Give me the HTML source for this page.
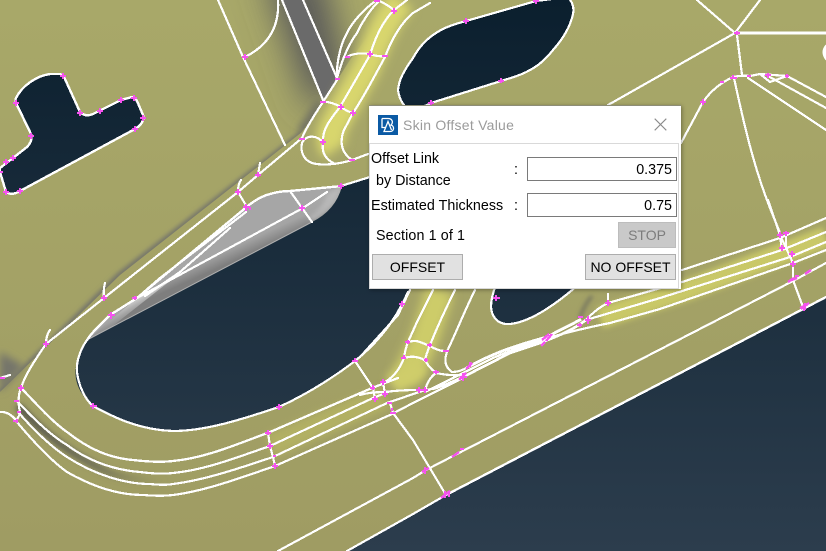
<!DOCTYPE html>
<html><head><meta charset="utf-8"><style>
html,body{margin:0;padding:0;background:#a6a567}
#w{position:relative;width:826px;height:551px;overflow:hidden;font-family:"Liberation Sans",sans-serif;font-size:14.3px;color:#000}
#w>svg{position:absolute;left:0;top:0}
#d{position:absolute;left:369px;top:105px;width:312px;height:183px;background:#fff;border-top:1px solid #8d8d78;box-shadow:1px 1px 4px rgba(0,0,0,.35)}
#p{position:absolute;left:0;top:37px;width:308px;height:144px;border:1px solid #d9d9d9;box-sizing:content-box}
.t{position:absolute;white-space:nowrap;line-height:18px}
.i{position:absolute;left:158px;width:148px;height:22px;border:1px solid #7a7a7a;background:#fff;text-align:right;line-height:24px;box-sizing:content-box}
.i span{padding-right:4px}
.b{position:absolute;box-sizing:border-box;border:1px solid #adadad;background:#e1e1e1;text-align:center;font-size:14px}
</style></head><body><div id="w">
<svg width="826" height="551" viewBox="0 0 826 551" fill="none">
<defs>
<linearGradient id="bg" gradientUnits="userSpaceOnUse" x1="0" y1="0" x2="0" y2="551"><stop offset="0" stop-color="#a8a869"/><stop offset="1" stop-color="#9f9c63"/></linearGradient>
<linearGradient id="dk" gradientUnits="userSpaceOnUse" x1="0" y1="0" x2="0" y2="551"><stop offset="0" stop-color="#0b1f2e"/><stop offset="1" stop-color="#2c3d4d"/></linearGradient>
<linearGradient id="wg" gradientUnits="userSpaceOnUse" x1="245" y1="232" x2="254" y2="252"><stop offset="0" stop-color="#a8a8a8"/><stop offset=".4" stop-color="#a4a4a4"/><stop offset="1" stop-color="#7e7e7e"/></linearGradient>
<linearGradient id="wl" gradientUnits="userSpaceOnUse" x1="120" y1="305" x2="132" y2="327"><stop offset="0" stop-color="#e8e8e8" stop-opacity=".9"/><stop offset="1" stop-color="#8a8a8a" stop-opacity="0"/></linearGradient>
<linearGradient id="cs" gradientUnits="userSpaceOnUse" x1="15" y1="0" x2="165" y2="0"><stop offset="0" stop-color="#4f4f4a"/><stop offset=".55" stop-color="#6f6f58"/><stop offset="1" stop-color="#8a8a5e" stop-opacity="0"/></linearGradient>
<filter id="b2" filterUnits="userSpaceOnUse" x="-50" y="-50" width="926" height="651"><feGaussianBlur stdDeviation="2"/></filter>
<filter id="b3" filterUnits="userSpaceOnUse" x="-50" y="-50" width="926" height="651"><feGaussianBlur stdDeviation="3"/></filter>
<filter id="b4" filterUnits="userSpaceOnUse" x="-50" y="-50" width="926" height="651"><feGaussianBlur stdDeviation="4"/></filter>
<filter id="b5" filterUnits="userSpaceOnUse" x="-50" y="-50" width="926" height="651"><feGaussianBlur stdDeviation="5"/></filter>
<filter id="b14" filterUnits="userSpaceOnUse" x="-50" y="-50" width="926" height="651"><feGaussianBlur stdDeviation="17"/></filter>
<clipPath id="cf"><path d="M0,0H395L350,60L323,102L302,132L120,275L0,392Z"/></clipPath>
</defs>
<rect width="826" height="551" fill="url(#bg)"/>

<!-- soft shading above fold -->
<g clip-path="url(#cf)">
<path d="M262,-30H322L348,78L312,112Z" fill="#5a5a5a" filter="url(#b14)"/>
<path d="M303,134L120,276L0,394" stroke="#76766a" stroke-width="8" filter="url(#b2)"/>
<path d="M322,104L302,134" stroke="#6f6f62" stroke-width="12" filter="url(#b4)"/>
</g>
<path d="M282,0H303L337,78L323,100Z" fill="#6a6a6a"/>
<path d="M24,366L0,392L0,352Z" fill="#74746a" filter="url(#b4)"/>

<!-- yellow bands -->
<path d="M402,0C385,20 378,40 365,70L338,118C330,132 328,140 335,150" stroke="#d8d66d" stroke-width="28" filter="url(#b5)"/>
<path d="M440,290L426,335C418,355 412,365 405,378" stroke="#cdcc69" stroke-width="28" filter="url(#b5)"/>
<path d="M392,385Q412,370 420,378" stroke="#cfcd6a" stroke-width="22" filter="url(#b4)"/>
<path d="M600,318L690,289L826,237" stroke="#c9c868" stroke-width="21" filter="url(#b3)"/>
<path d="M270,446L385,397" stroke="#b5b363" stroke-width="24" filter="url(#b4)" opacity=".85"/>
<path d="M580,318Q584,305 592,296" stroke="#70705f" stroke-width="3" filter="url(#b2)"/>
<path d="M18,406C40,430 65,452 110,473C125,478 140,480 165,481" stroke="url(#cs)" stroke-width="7" filter="url(#b3)"/>

<!-- wedge -->
<path d="M87,340C95,330 100,325 110,315L137,298L243,210L267,195Q278,191 290,191L342,186Q336,210 312,222Z" fill="#a6a6a6"/>
<path d="M87,340L137,298L303,208L327,192L342,186Q336,210 312,222Z" fill="url(#wg)"/>
<path d="M87,340L137,298L175,277L100,336Z" fill="url(#wl)"/>
<path d="M327,194Q322,210 308,216L312,222Q336,210 342,186Z" fill="#c0c0c0" filter="url(#b2)" opacity=".7"/>

<!-- dark holes -->
<path d="M87,340L312,222Q336,210 342,186L372,176L420,260L408,292C395,322 375,345 355,361C330,380 305,395 279,407C240,420 205,431 173,431C140,430 115,418 93,406C80,395 72,380 77,362Q80,350 87,340Z" fill="url(#dk)"/>
<path d="M87,340L312,222" stroke="#b0b0b0" stroke-width="1"/>
<g shape-rendering="crispEdges">
<path d="M16,98C22,86 36,76 50,74L60,74Q63,75 65,79L80,112Q86,118 95,113L121,100L132,97Q135,97 137,101L143,115Q145,123 135,129L20,191Q12,196 6,192L0,172V168L13,158L27,147Q33,141 31,134L16,103Q15,100 16,98Z" fill="url(#dk)" stroke="#fff" stroke-width="2.4"/>
<path d="M398,90C399,80 403,72 413,58C420,45 428,38 436,33C445,27 455,24 466,21L536,1L568,-3Q575,5 573,14C570,28 562,40 553,50C545,60 538,66 530,70C520,76 510,78 501,81L431,103L412,112Q400,105 398,90Z" fill="url(#dk)" stroke="#fff" stroke-width="2.2"/>
<path d="M496,285Q488,305 493,315Q498,325 510,324C530,322 555,305 578,285Z" fill="url(#dk)" stroke="#fff" stroke-width="2.2"/>
</g>
<path d="M347,551L413,514L446,495L805,308L826,297V551Z" fill="url(#dk)"/>
<path d="M826,45Q820,52 826,60" fill="#fff" stroke="#fff"/>

<!-- white lines -->
<g stroke="#fff" stroke-width="2.2" stroke-linecap="round" stroke-linejoin="round" shape-rendering="crispEdges">
<path d="M218,0L243,57L285,145"/>
<path d="M278,0C280,30 265,47 245,57"/>
<path d="M282,0L323,100M303,0L337,78"/>
<!-- upper band -->
<path d="M302,138C306,128 315,114 323,102L337,80C336,65 340,45 347,33C352,22 365,8 377,0"/>
<path d="M337,78C342,60 348,45 357,33C362,22 370,10 378,2"/>
<path d="M323,140C323,130 328,122 340,107L370,55C375,38 382,22 394,10L407,0"/>
<path d="M352,160C340,152 340,140 344,130L353,113C365,95 375,75 385,57C392,38 402,22 413,13L430,3"/>
<path d="M322,102Q330,101 341,107Q348,112 353,113"/>
<path d="M347,57Q355,52 370,54Q378,57 385,56"/>
<path d="M377,0Q385,3 394,10"/>
<path d="M302,143C306,134 318,135 323,143C322,150 323,158 335,164M302,143C300,152 304,160 312,163C322,166 340,164 352,160L368,154"/>
<!-- main diagonal -->
<path d="M302,138L258,175L238,192L133,275L104,298L46,344C35,360 25,375 21,388"/>
<path d="M238,192L247,207M238,192Q238,184 241,180M258,175L260,163M104,298Q103,290 105,283M46,344Q46,335 50,330"/>
<path d="M21,388C18,395 18,405 20,412C20,415 18,418 16,421M0,412Q8,411 16,420M0,378L10,375"/>
<!-- wedge lines -->
<path d="M87,340C93,331 100,325 110,315L137,298L243,210C252,202 262,196 270,194Q280,191 290,191L342,186" stroke-width="2.4"/>
<path d="M137,298L160,278L246,212M145,296L180,272L230,228M137,298L303,208L327,192M290,191L312,222M341,186L370,177"/>
<!-- large hole edge -->
<path d="M87,340C80,350 76,362 77,372C79,388 86,400 93,406C115,418 140,430 173,431C205,431 240,420 279,407C305,395 330,380 355,361C375,345 395,322 408,292"/>
<path d="M355,361L373,388"/>
<!-- curves A-D -->
<path d="M21,388C35,402 50,420 67,432C90,450 110,458 133,460C150,462 165,462 173,461C205,458 235,445 270,432L372,388L398,378" stroke-width="2.3"/>
<path d="M17,401C30,415 50,435 67,445C90,462 115,470 140,472C155,474 165,474 173,473C205,470 235,458 270,446L373,398L388,392"/>
<path d="M18,412C32,428 50,446 67,457C95,475 125,484 150,484C160,485 168,485 173,484C205,480 240,468 273,457L387,403L425,390"/>
<path d="M16,421C32,440 50,460 67,472C95,488 120,495 143,495C155,496 165,496 173,495C205,491 240,478 275,466L390,415L413,403L463,378"/>
<path d="M268,433L270,446L273,457L275,466"/>
<!-- lower band -->
<path d="M410,290L398,315L360,357"/>
<path d="M433,290L417,322L408,342Q405,350 404,358C400,368 395,376 385,382"/>
<path d="M455,290C445,310 438,325 430,345C428,350 426,355 425,360"/>
<path d="M475,290C465,310 458,328 450,345C445,355 442,365 452,372Q460,372 468,367"/>
<path d="M408,342Q415,340 420,342Q425,344 430,346Q438,351 445,351"/>
<path d="M404,358Q412,356 415,357Q425,358 428,365Q432,370 436,373C430,377 426,385 425,391"/>
<path d="M436,373Q450,376 463,375"/>
<path d="M360,395Q370,392 385,392Q400,390 418,390Q430,390 437,388L463,377"/>
<path d="M373,388L375,399M383,382L385,394M390,403L393,413M393,413L413,440L446,495"/>
<!-- to the right -->
<path d="M468,367C490,355 510,347 547,337C560,330 570,325 580,320" stroke-width="2.9"/>
<path d="M463,377L510,353L540,343C555,337 570,332 586,320" stroke-width="2.7"/>
<path d="M425,392L493,358C530,342 565,332 610,323L660,309"/>
<path d="M413,478L278,551"/>
<path d="M413,478L426,470L455,455L793,281L826,263"/>
<path d="M446,495L413,514L347,551"/>
<path d="M446,495L805,308L826,297" stroke-width="2.4"/>
<path d="M586,320Q597,308 608,303L682,282L782,250L826,232"/>
<path d="M608,303L608,294"/>
<path d="M682,270L780,238L826,218"/>
<path d="M586,320L660,298L790,257L826,242"/>
<path d="M660,309L793,263L826,250"/>
<path d="M768,200L780,235L793,263L793,280L803,307"/>
<path d="M780,236L782,250M786,233L786,248"/>
<!-- top right -->
<path d="M697,0L735,33L760,0M608,105L735,33"/>
<path d="M738,33L826,33" stroke-width="2.6"/>
<path d="M737,35L742,75"/>
<path d="M681,143L703,102C710,92 720,83 733,77Q742,75 750,76L760,74L787,76"/>
<path d="M734,78C742,115 750,150 760,180C768,205 775,220 780,233"/>
<path d="M748,78L826,130M768,76L826,108M787,76L826,97M760,74L770,82L787,76"/>
</g>

<!-- pink markers -->
<path stroke="#f653f0" stroke-width="2.4" shape-rendering="crispEdges" d="
M60,76h6M63,73v6M13,103h6M16,100v6M28,136h6M31,133v6M10,158h6M13,155v6M3,162h6M6,159v6M-3,172h6M3,192h6M6,189v6M17,191h6M20,188v6M77,113h6M80,110v6M97,111h6M100,108v6M118,100h6M121,97v6M131,98h6M134,95v6M140,118h6M143,115v6M132,129h6M135,126v6
M242,57h6M245,54v6M320,102h6M335,79h5M345,57h5M367,54h6M370,51v6M382,56h6M391,11h6M394,8v6M374,1h6
M338,107h6M341,104v6M350,113h6M353,110v6M299,139h6M320,142h6M323,139v6M349,160h6M338,186h6M341,183v6M255,175h6M258,172v5M235,192h6M238,189v6M243,207h7M246,204v7M250,207v3M299,208h6M302,205v6
M101,298h6M104,295v6M43,344h6M46,341v6M132,298h5M135,296v4M108,315h7M111,312v7M18,388h6M21,385v6M14,401h5M17,419v4M17,412h4M13,421h5M0,378h5M90,406h7M93,403v6M276,407h6M279,404v6M352,361h6M355,358v4M399,304h6M402,301v6
M265,433h6M268,430v5M267,446h6M270,443v6M273,456h3M272,466h6M275,463v6M370,388h5M373,385v5M380,382h6M383,379v6M372,399h6M375,396v6M382,394h6M385,391v6M387,403h5M392,408v3M390,413h6M405,342h5M408,340v4M401,358h5M404,355v4
M463,21h6M466,18v6M533,1h6M536,-1v5M498,81h6M501,78v5M428,103h6M431,100v5
M734,33h6M737,31v4M700,102h6M703,99v6M720,82h4M730,78h7M733,75v4M747,76h4M765,75h6M768,73v5M785,76h4M787,74v4
M493,298h7M496,295v6M605,303h6M608,300v6M585,320h6M588,316v8M577,325h5M580,323v4M578,317h5M542,340l7,-6M546,341l6,-7M541,346l4,-4M466,369l6,-6M470,362v5M459,380l7,-7M463,373v8M460,377h7M427,345h5M430,343v4M443,351h6M424,360h4M426,358v4M433,372h6M436,370v4M416,390h6M419,387v6M422,390h6M425,387v6M452,457l7,-5M460,449h4M422,472l7,-4M425,467v7M441,498l9,-7M445,491v7M449,492v5M788,282l6,-4M795,276h4M801,309l8,-6M805,303v7
M777,235h6M780,232v6M783,233h6M786,231v5M779,248h6M782,245v6M789,254h6M792,251v6M790,264h6M793,261v6M789,281l8,-3M805,274l6,-4M800,308l8,-4M804,304v7"/>
</svg>

<div id="d">
<svg style="position:absolute;left:9px;top:9px" width="20" height="20" viewBox="0 0 20 20"><rect width="20" height="20" fill="#0b5aa4"/><path d="M4,3.5V12.5H8M4,3.5H10C14.5,3.5 15.5,7.5 13,10C16.5,11 16.5,16.5 12,16.5H6L10,6.5L13.5,15" fill="none" stroke="#fff" stroke-width="1.3"/></svg>
<div class="t" style="left:34px;top:10px;color:#9b9b9b;font-size:14px;letter-spacing:.25px">Skin Offset Value</div>
<svg style="position:absolute;left:285px;top:12px" width="13" height="13" viewBox="0 0 13 13"><path d="M.7,.7L12.3,12.3M12.3,.7L.7,12.3" stroke="#8a8a8a" stroke-width="1.1" fill="none"/></svg>
<div id="p"></div>
<div class="t" style="left:2px;top:44px">Offset Link</div>
<div class="t" style="left:7px;top:66px">by Distance</div>
<div class="t" style="left:145px;top:55px">:</div>
<div class="i" style="top:51px"><span>0.375</span></div>
<div class="t" style="left:2px;top:91px;letter-spacing:.03px">Estimated Thickness</div>
<div class="t" style="left:145px;top:91px">:</div>
<div class="i" style="top:87px"><span>0.75</span></div>
<div class="t" style="left:7px;top:121px;letter-spacing:.12px">Section 1 of 1</div>
<div class="b" style="left:249px;top:116px;width:58px;height:26px;background:#c9c9c9;border-color:#bdbdbd;color:#7d7d7d;line-height:25px">STOP</div>
<div class="b" style="left:3px;top:148px;width:91px;height:26px;line-height:25px">OFFSET</div>
<div class="b" style="left:216px;top:148px;width:91px;height:26px;line-height:25px">NO OFFSET</div>
</div>
</div></body></html>
